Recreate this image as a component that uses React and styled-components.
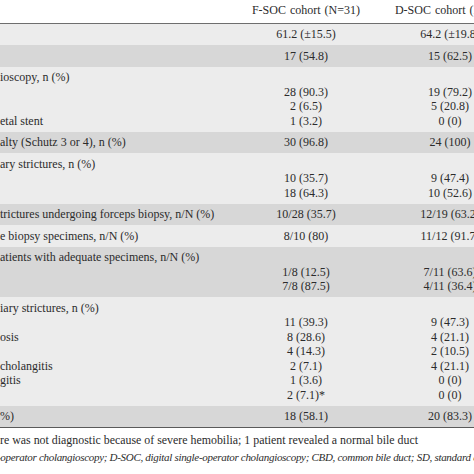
import styled, { createGlobalStyle } from "styled-components";

const GlobalStyle = createGlobalStyle`
  html, body {
    margin: 0;
    padding: 0;
    background: #fff;
  }
  body {
    width: 474px;
    height: 474px;
    overflow: hidden;
  }
`;

const Page = styled.div`
  width: 474px;
  height: 474px;
  overflow: hidden;
  font-family: "Liberation Serif", "DejaVu Serif", serif;
  color: #2b2b2b;
  background: #fff;
`;

const Table = styled.div`
  width: 538px;
`;

const Line = styled.div`
  display: grid;
  grid-template-columns: 250px 112px 176px;
  font-size: 12px;
  line-height: 14.5px;
  white-space: nowrap;

  span + span {
    text-align: center;
  }
`;

const Header = styled(Line)`
  height: 22.5px;
  line-height: 20px;
  word-spacing: 1px;
  border-bottom: 1.5px solid #6e6e6e;
`;

const Row = styled.div`
  padding: 3.5px 0;
  background: ${({ dark }) => (dark ? "#d7d7d7" : "#ececec")};
`;

const Footer = styled.div`
  border-top: 1px solid #5a5a5a;
  padding-top: 4px;
  font-size: 11.9px;
  line-height: 17px;
  white-space: nowrap;
`;

const Note = styled.div`
  font-style: ${({ italic }) => (italic ? "italic" : "normal")};
  font-size: ${({ italic }) => (italic ? "11px" : "inherit")};
  letter-spacing: ${({ italic }) => (italic ? "-0.3px" : "normal")};
  text-indent: ${({ indent }) => indent || 0}px;
`;

const rows = [
  { dark: false, lines: [["", "61.2 (±15.5)", "64.2 (±19.8)"]] },
  { dark: true, lines: [["", "17 (54.8)", "15 (62.5)"]] },
  {
    dark: false,
    lines: [
      ["ioscopy, n (%)", "", ""],
      ["", "28 (90.3)", "19 (79.2)"],
      ["", "2 (6.5)", "5 (20.8)"],
      ["etal stent", "1 (3.2)", "0 (0)"],
    ],
  },
  { dark: true, lines: [["alty (Schutz 3 or 4), n (%)", "30 (96.8)", "24 (100)"]] },
  {
    dark: false,
    lines: [
      ["ary strictures, n (%)", "", ""],
      ["", "10 (35.7)", "9 (47.4)"],
      ["", "18 (64.3)", "10 (52.6)"],
    ],
  },
  {
    dark: true,
    lines: [["trictures undergoing forceps biopsy, n/N (%)", "10/28 (35.7)", "12/19 (63.2)"]],
  },
  { dark: false, lines: [["e biopsy specimens, n/N (%)", "8/10 (80)", "11/12 (91.7)"]] },
  {
    dark: true,
    lines: [
      ["atients with adequate specimens, n/N (%)", "", ""],
      ["", "1/8 (12.5)", "7/11 (63.6)"],
      ["", "7/8 (87.5)", "4/11 (36.4)"],
    ],
  },
  {
    dark: false,
    lines: [
      ["iary strictures, n (%)", "", ""],
      ["", "11 (39.3)", "9 (47.3)"],
      ["osis", "8 (28.6)", "4 (21.1)"],
      ["", "4 (14.3)", "2 (10.5)"],
      ["cholangitis", "2 (7.1)", "4 (21.1)"],
      ["gitis", "1 (3.6)", "0 (0)"],
      ["", "2 (7.1)*", "0 (0)"],
    ],
  },
  { dark: true, lines: [["%)", "18 (58.1)", "20 (83.3)"]] },
];

export default function App() {
  return (
    <Page>
      <GlobalStyle />
      <Table>
        <Header>
          <span></span>
          <span>F-SOC cohort (N=31)</span>
          <span>D-SOC cohort (N=24)</span>
        </Header>
        {rows.map((row, i) => (
          <Row key={i} dark={row.dark}>
            {row.lines.map((cells, j) => (
              <Line key={j}>
                {cells.map((c, k) => (
                  <span key={k}>{c}</span>
                ))}
              </Line>
            ))}
          </Row>
        ))}
        <Footer>
          <Note>re was not diagnostic because of severe hemobilia; 1 patient revealed a normal bile duct</Note>
          <Note italic indent={-3}>
            -operator cholangioscopy; D-SOC, digital single-operator cholangioscopy; CBD, common bile duct; SD, standard deviation
          </Note>
        </Footer>
      </Table>
    </Page>
  );
}
